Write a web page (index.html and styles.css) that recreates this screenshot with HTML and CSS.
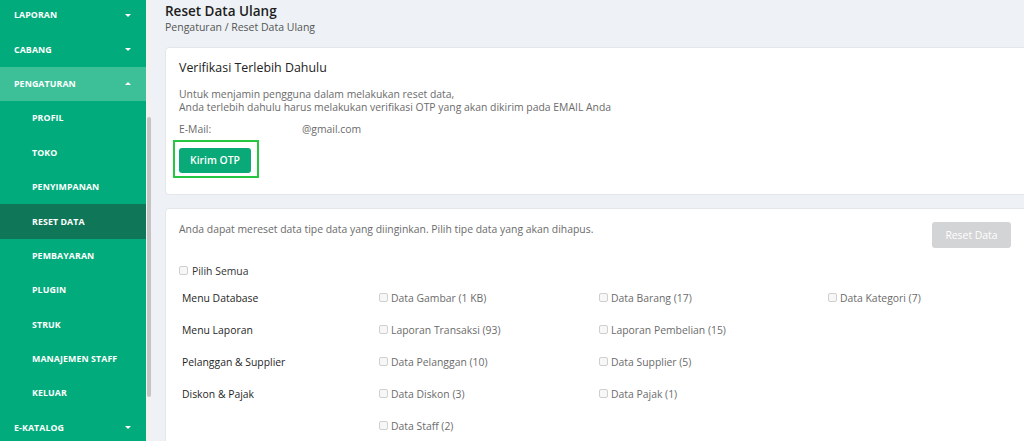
FILE: index.html
```html
<!DOCTYPE html>
<html lang="id">
<head>
<meta charset="utf-8">
<title>Reset Data Ulang</title>
<link rel="stylesheet" href="styles.css">
</head>
<body>
<div class="app">
  <aside class="sidebar">
    <ul class="nav">
      <li class="item top"><span>LAPORAN</span><i class="caret down"></i></li>
      <li class="item top"><span>CABANG</span><i class="caret down"></i></li>
      <li class="item top open"><span>PENGATURAN</span><i class="caret up"></i></li>
      <li class="item sub"><span>PROFIL</span></li>
      <li class="item sub"><span>TOKO</span></li>
      <li class="item sub"><span>PENYIMPANAN</span></li>
      <li class="item sub active"><span>RESET DATA</span></li>
      <li class="item sub"><span>PEMBAYARAN</span></li>
      <li class="item sub"><span>PLUGIN</span></li>
      <li class="item sub"><span>STRUK</span></li>
      <li class="item sub"><span>MANAJEMEN STAFF</span></li>
      <li class="item sub"><span>KELUAR</span></li>
      <li class="item top"><span>E-KATALOG</span><i class="caret down"></i></li>
    </ul>
  </aside>
  <div class="scrollbar"><div class="thumb"></div></div>
  <main class="main">
    <header class="page-head">
      <h1 class="page-title">Reset Data Ulang</h1>
      <div class="crumb">Pengaturan / Reset Data Ulang</div>
    </header>

    <section class="card verify">
      <h2 class="card-title">Verifikasi Terlebih Dahulu</h2>
      <p class="desc">Untuk menjamin pengguna dalam melakukan reset data,<br>Anda terlebih dahulu harus melakukan verifikasi OTP yang akan dikirim pada EMAIL Anda</p>
      <div class="email-row"><span class="email-label">E-Mail:</span><span class="email-value">@gmail.com</span></div>
      <div class="otp-frame"><button class="btn-otp">Kirim OTP</button></div>
    </section>

    <section class="card reset">
      <div class="reset-head">
        <p class="desc">Anda dapat mereset data tipe data yang diinginkan. Pilih tipe data yang akan dihapus.</p>
        <button class="btn-reset">Reset Data</button>
      </div>
      <label class="check all"><span class="box"></span>Pilih Semua</label>
      <div class="grid">
        <div class="group">Menu Database</div>
        <label class="check"><span class="box"></span>Data Gambar (1 KB)</label>
        <label class="check"><span class="box"></span>Data Barang (17)</label>
        <label class="check"><span class="box"></span>Data Kategori (7)</label>

        <div class="group">Menu Laporan</div>
        <label class="check"><span class="box"></span>Laporan Transaksi (93)</label>
        <label class="check"><span class="box"></span>Laporan Pembelian (15)</label>
        <div></div>

        <div class="group">Pelanggan &amp; Supplier</div>
        <label class="check"><span class="box"></span>Data Pelanggan (10)</label>
        <label class="check"><span class="box"></span>Data Supplier (5)</label>
        <div></div>

        <div class="group">Diskon &amp; Pajak</div>
        <label class="check"><span class="box"></span>Data Diskon (3)</label>
        <label class="check"><span class="box"></span>Data Pajak (1)</label>
        <div></div>

        <div></div>
        <label class="check"><span class="box"></span>Data Staff (2)</label>
        <div></div>
        <div></div>
      </div>
    </section>
  </main>
</div>
</body>
</html>
```

FILE: styles.css
```css
* { box-sizing: border-box; }
html, body { margin: 0; padding: 0; }
body {
  width: 1024px;
  height: 441px;
  overflow: hidden;
  font-family: "Open Sans", "DejaVu Sans", sans-serif;
  background: #eef2f6;
}
.app {
  display: flex;
  height: 441px;
}

/* Sidebar */
.sidebar {
  width: 146px;
  flex: none;
  background: #02ab7b;
  overflow: hidden;
}
.nav {
  list-style: none;
  margin: -2px 0 0 0;
  padding: 0;
}
.item {
  height: 34.4px;
  display: flex;
  align-items: center;
  justify-content: space-between;
  padding: 0 14px 0 14px;
  color: #ffffff;
  font-size: 8.8px;
  font-weight: 700;
  letter-spacing: 0.1px;
}
.item.sub { padding-left: 32px; }
.item.open { background: #3dbf98; }
.item.active { background: #0f7657; }
.caret {
  width: 0;
  height: 0;
  border-left: 3px solid transparent;
  border-right: 3px solid transparent;
  margin-right: 1px;
}
.caret.down { border-top: 3px solid #ffffff; }
.caret.up { border-bottom: 3px solid #ffffff; }

/* scrollbar */
.scrollbar {
  width: 6px;
  flex: none;
  background: #f1f1f1;
  padding: 117px 1px 0 1px;
}
.thumb {
  height: 280px;
  background: #c4c4c4;
  border-radius: 2px;
}

/* Main */
.main {
  flex: 1;
  min-width: 0;
  overflow: hidden;
  padding: 3px 0 0 13px;
}
.page-title {
  margin: 0;
  font-size: 13.5px;
  font-weight: 600;
  color: #1d1d1d;
  line-height: 17px;
}
.crumb {
  font-size: 10.5px;
  color: #555;
  line-height: 14px;
  margin-top: 0;
}
.card {
  width: 900px;
  background: #ffffff;
  border: 1px solid #e3e7ea;
  border-radius: 4px;
  padding-left: 13px;
}
.verify {
  margin-top: 13px;
  height: 148px;
  padding-top: 11px;
}
.card-title {
  margin: 0;
  font-size: 12.4px;
  font-weight: 400;
  color: #222;
  line-height: 18px;
}
.desc {
  margin: 0;
  font-size: 10.4px;
  line-height: 12.5px;
  color: #6b6b6b;
}
.verify .desc { margin-top: 11px; }
.email-row {
  margin-top: 9px;
  font-size: 10.4px;
  line-height: 14px;
  color: #6b6b6b;
  display: flex;
}
.email-label { width: 123px; }
.otp-frame {
  margin-top: 4px;
  margin-left: -6px;
  width: 86px;
  height: 38px;
  border: 2px solid #25c642;
  padding: 5px 0 0 4px;
}
.btn-otp {
  width: 72px;
  height: 25px;
  border: none;
  border-radius: 3px;
  background: #0aaa78;
  color: #ffffff;
  font-family: inherit;
  font-size: 10.4px;
  font-weight: 600;
  padding: 0;
}

.reset {
  margin-top: 13px;
  height: 260px;
  padding-top: 13px;
}
.reset-head {
  display: flex;
  justify-content: space-between;
  align-items: flex-start;
  width: 832px;
}
.reset-head .desc { margin-top: 1px; }
.btn-reset {
  margin-top: 0;
  width: 79px;
  height: 26px;
  border: none;
  border-radius: 3px;
  background: #d3d4d5;
  color: #ffffff;
  font-family: inherit;
  font-size: 10.4px;
  padding: 0;
}
.check {
  display: flex;
  align-items: center;
  font-size: 10.4px;
  color: #6b6b6b;
  line-height: 14px;
}
.box {
  width: 9px;
  height: 9px;
  border: 1px solid #cfcfcf;
  border-radius: 2px;
  background: #f7f7f7;
  margin-right: 3px;
  margin-top: -2px;
  flex: none;
}
.check.all {
  margin-top: 16px;
  color: #333;
}
.check.all .box { margin-right: 4px; }
.grid {
  margin-top: 4px;
  margin-left: 3px;
  display: grid;
  grid-template-columns: 197px 220px 229px 1fr;
  grid-auto-rows: 32px;
  align-items: center;
}
.group {
  font-size: 10.4px;
  font-weight: 500;
  color: #1f1f1f;
}
```
